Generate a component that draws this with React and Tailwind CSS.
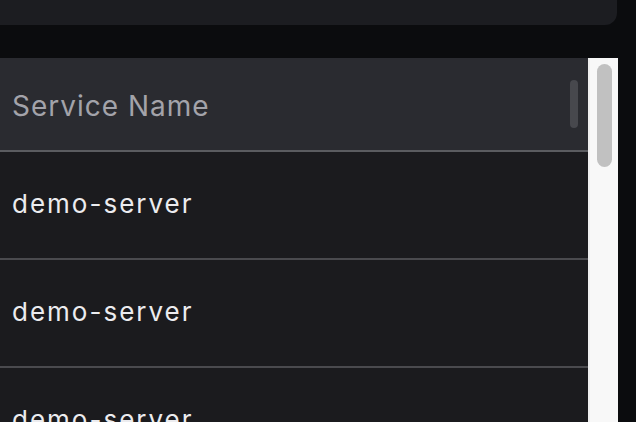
const rows = ["demo-server", "demo-server", "demo-server"];

export default function App() {
  return (
    <div
      className="h-[422px] w-[636px] overflow-hidden bg-[#0b0c0e]"
      style={{ fontFamily: "Inter, 'Noto Sans', sans-serif" }}
    >
      {/* Top panel edge */}
      <div className="h-[25px] w-[617px] rounded-br-[12px] bg-[#1c1d21]" />

      <div className="mt-[33px] flex h-[364px] w-[618px]">
        {/* Table */}
        <div className="flex w-[588px] flex-col">
          <div className="flex h-[94px] shrink-0 items-center justify-between border-b-2 border-[#5b5c60] bg-[#2a2b30] pl-[12px] pr-[10px]">
            <span className="pt-[4px] text-[28px] tracking-[1px] text-[#a3a3aa]">
              Service Name
            </span>
            <div className="h-[48px] w-[8px] rounded-full bg-[#47484d]" />
          </div>
          {rows.map((name, i) => (
            <div
              key={i}
              className="flex h-[108px] shrink-0 items-center border-b-2 border-[#4a4a4e] bg-[#1b1b1e] pb-[3px] pl-[12px]"
            >
              <span className="text-[26px] tracking-[2px] text-[#ececef]">
                {name}
              </span>
            </div>
          ))}
        </div>

        {/* Scrollbar */}
        <div className="flex w-[30px] justify-center border-l-2 border-[#efefef] bg-[#f8f8f8] pt-[6px]">
          <div className="h-[103px] w-[15px] rounded-full bg-[#c1c1c1]" />
        </div>
      </div>
    </div>
  );
}
